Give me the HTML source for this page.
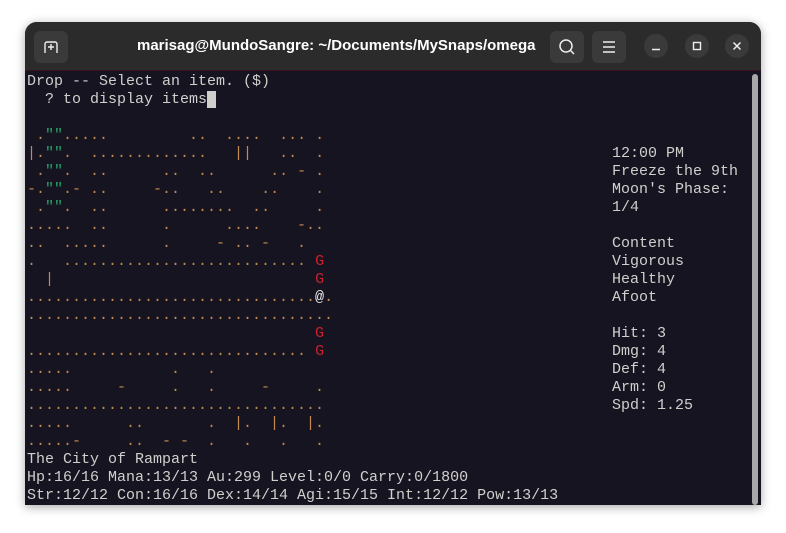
<!DOCTYPE html>
<html><head><style>
body{margin:0;width:786px;height:533px;background:#fff;position:relative;overflow:hidden;font-family:"Liberation Sans",sans-serif}
.win{position:absolute;left:25px;top:22px;width:736px;height:483px;border-radius:12px 12px 0 0;background:#171421;box-shadow:0 2px 10px rgba(0,0,0,.35);overflow:hidden}
.tb{position:absolute;left:0;top:0;width:736px;height:48px;background:#2b2b2b;border-bottom:1px solid #3c0f22}
.btn{position:absolute;top:9px;width:34px;height:32px;border-radius:6px;background:#3a3a3a}
.cir{position:absolute;top:12px;width:24px;height:24px;border-radius:50%;background:#3a3a3a}
.title{position:absolute;left:112px;top:15px;color:#fff;font-weight:bold;font-size:15px;white-space:nowrap}
pre{position:absolute;left:2px;top:51px;margin:0;font-family:"Liberation Mono",monospace;font-size:15px;line-height:18px;color:#d0cfcc}
.o{color:#c28a4e}.g{color:#26a269}.r{color:#d0202e}.w{color:#e8e8e8}
.cur{background:#d0cfcc;color:#171421}
.sb{position:absolute;left:727px;top:52px;width:6px;height:431px;border-radius:3px;background:#a8a8a8}
</style></head><body>
<div class="win">
<div class="tb">
<div class="btn" style="left:9px"><svg width="34" height="32"><path d="M11 22V13a2 2 0 0 1 2-2h8a2 2 0 0 1 2 2v9M14 16h6M17 13v6" stroke="#eee" stroke-width="1.4" fill="none"/></svg></div>
<div class="title">marisag@MundoSangre: ~/Documents/MySnaps/omega</div>
<div class="btn" style="left:525px"><svg width="34" height="32"><circle cx="16" cy="15" r="6" stroke="#eee" stroke-width="1.5" fill="none"/><path d="M20.5 19.5l3.5 3.5" stroke="#eee" stroke-width="1.5"/></svg></div>
<div class="btn" style="left:567px"><svg width="34" height="32"><path d="M11 11h12M11 16h12M11 21h12" stroke="#eee" stroke-width="1.4"/></svg></div>
<div class="cir" style="left:619px"><svg width="24" height="24"><path d="M8 15.5h8" stroke="#eee" stroke-width="1.5"/></svg></div>
<div class="cir" style="left:660px"><svg width="24" height="24"><rect x="8.5" y="8.5" width="7" height="7" stroke="#eee" stroke-width="1.4" fill="none"/></svg></div>
<div class="cir" style="left:700px"><svg width="24" height="24"><path d="M8.5 8.5l7 7M15.5 8.5l-7 7" stroke="#eee" stroke-width="1.5"/></svg></div>
</div>
<pre>Drop -- Select an item. ($)
  ? to display items<span class="cur"> </span>

<span class="o"> .<span class="g">""</span>.....         ..  ....  ... .</span>
<span class="o">|.<span class="g">""</span>.  .............   ||   ..  .</span>
<span class="o"> .<span class="g">""</span>.  ..      ..  ..      .. - .</span>
<span class="o">-.<span class="g">""</span>.- ..     -..   ..    ..    .</span>
<span class="o"> .<span class="g">""</span>.  ..      ........  ..     .</span>
<span class="o">.....  ..      .      ....    -..</span>
<span class="o">..  .....      .     - .. -   .</span>
<span class="o">.   ...........................</span> <span class="r">G</span>
<span class="o">  |</span>                             <span class="r">G</span>
<span class="o">................................</span><span class="w">@</span><span class="o">.</span>
<span class="o">..................................</span>
                                <span class="r">G</span>
<span class="o">...............................</span> <span class="r">G</span>
<span class="o">.....           .   .</span>
<span class="o">.....     -     .   .     -     .</span>
<span class="o">.................................</span>
<span class="o">.....      ..       .  |.  |.  |.</span>
<span class="o">.....-     ..  - -  .   .   .   .</span>
The City of Rampart
Hp:16/16 Mana:13/13 Au:299 Level:0/0 Carry:0/1800
Str:12/12 Con:16/16 Dex:14/14 Agi:15/15 Int:12/12 Pow:13/13</pre>
<pre style="left:587px;top:123px">12:00 PM
Freeze the 9th
Moon's Phase:
1/4

Content
Vigorous
Healthy
Afoot

Hit: 3
Dmg: 4
Def: 4
Arm: 0
Spd: 1.25</pre>
<div class="sb"></div>
</div>
</body></html>
